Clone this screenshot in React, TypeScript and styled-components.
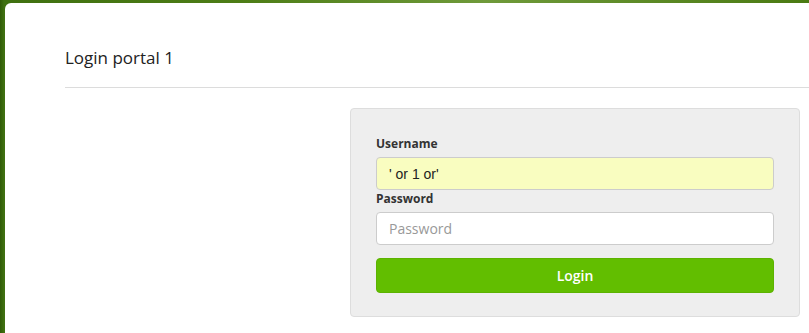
import styled, { createGlobalStyle } from "styled-components";

const GlobalStyle = createGlobalStyle`
  html, body {
    margin: 0;
    height: 100%;
  }
  body {
    background: linear-gradient(90deg, #2f5a07 0px, #3f7010 4px, #4d7d16 30%, #6f9a3a 60%, #4a7a12 100%);
    font-family: "Open Sans", "Noto Sans", sans-serif;
    overflow: hidden;
  }
  #root {
    height: 100%;
  }
`;

const Page = styled.div`
  height: 100%;
  box-sizing: border-box;
  padding: 3px 0 0 5px;
  display: flex;
`;

const Panel = styled.main`
  flex: 1;
  background: #fff;
  border-top-left-radius: 6px;
  padding: 0 0 0 60px;
`;

const Header = styled.header`
  padding: 43px 0 17px;
  border-bottom: 1px solid #dcdcdc;
`;

const Title = styled.h1`
  margin: 0;
  font-size: 17px;
  font-weight: 400;
  line-height: 24px;
  color: #222;
`;

const Content = styled.section`
  display: grid;
  grid-template-columns: 285px 450px;
  padding-top: 20px;
`;

const LoginBox = styled.form`
  grid-column: 2;
  background: #eee;
  border: 1px solid #ddd;
  border-radius: 4px;
  padding: 26px 25px 23px 25px;
  display: flex;
  flex-direction: column;
`;

const Label = styled.label`
  font-size: 12px;
  font-weight: 700;
  color: #333;
  line-height: 17px;
  margin-bottom: 5px;
`;

const Input = styled.input<{ $filled?: boolean }>`
  box-sizing: border-box;
  height: 33px;
  width: 100%;
  padding: 6px 12px;
  border: 1px solid #ccc;
  border-radius: 4px;
  background: ${(p) => (p.$filled ? "#f9fdc0" : "#fff")};
  font-family: ${(p) => (p.$filled ? '"Liberation Sans", Arial, sans-serif' : '"Open Sans", sans-serif')};
  font-size: 14px;
  color: #222;
  outline: none;

  &::placeholder {
    color: #999;
  }
`;

const Spacer = styled.div`
  height: 13px;
`;

const Button = styled.button`
  height: 35px;
  width: 100%;
  border: 1px solid #5cb300;
  border-radius: 4px;
  background: #62be00;
  color: #fff;
  font-family: "Open Sans", sans-serif;
  font-size: 14px;
  font-weight: 600;
  cursor: pointer;
`;

export default function App() {
  return (
    <>
      <GlobalStyle />
      <Page>
        <Panel>
          <Header>
            <Title>Login portal 1</Title>
          </Header>
          <Content>
            <LoginBox onSubmit={(e) => e.preventDefault()}>
              <Label>Username</Label>
              <Input $filled defaultValue="' or 1 or'" />
              <Label>Password</Label>
              <Input type="password" placeholder="Password" />
              <Spacer />
              <Button type="submit">Login</Button>
            </LoginBox>
          </Content>
        </Panel>
      </Page>
    </>
  );
}
